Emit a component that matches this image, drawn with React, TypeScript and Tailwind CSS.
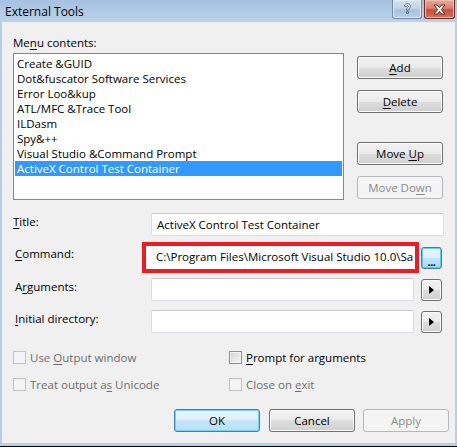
import type { ReactNode } from "react";

const items = [
  "Create &GUID",
  "Dot&fuscator Software Services",
  "Error Loo&kup",
  "ATL/MFC &Trace Tool",
  "ILDasm",
  "Spy&++",
  "Visual Studio &Command Prompt",
  "ActiveX Control Test Container",
];

// access key: underline the char at index `at`
function Mn({ text, at }: { text: string; at: number }) {
  return (
    <span className="whitespace-pre">
      {text.slice(0, at)}
      <span className="underline decoration-1 underline-offset-[2px]">{text[at]}</span>
      {text.slice(at + 1)}
    </span>
  );
}

function WinButton({
  children,
  kind = "normal",
  className = "",
}: {
  children: ReactNode;
  kind?: "normal" | "default" | "disabled";
  className?: string;
}) {
  const look =
    kind === "default"
      ? "border-[#3c7fb1] bg-[linear-gradient(#ebf6fd_0%,#dcf0fb_50%,#c7e7f8_50%,#b9def3_100%)] shadow-[inset_0_0_0_1px_#7ad0f5] text-black"
      : kind === "disabled"
        ? "border-[#b5b8bb] bg-[#f4f4f4] text-[#8b8b8b]"
        : "border-[#707070] bg-[linear-gradient(#f2f2f2_0%,#ebebeb_50%,#dedede_50%,#d0d0d0_100%)] shadow-[inset_0_0_0_1px_#fbfbfb] text-black";
  return (
    <div
      className={`flex h-[23px] w-[86px] items-center justify-center rounded-[3px] border ${look} ${className}`}
    >
      <span className="whitespace-pre">{children}</span>
    </div>
  );
}

function ArrowButton() {
  return (
    <div className="flex h-[22px] w-[21px] items-center justify-center rounded-[3px] border border-[#707070] bg-[linear-gradient(#f2f2f2_0%,#ebebeb_50%,#dedede_50%,#d0d0d0_100%)] shadow-[inset_0_0_0_1px_#fbfbfb]">
      <svg width="5" height="8" viewBox="0 0 5 8">
        <path d="M0 0 L5 4 L0 8 Z" fill="#000" />
      </svg>
    </div>
  );
}

function TextBox({ value = "", className = "" }: { value?: string; className?: string }) {
  return (
    <div
      className={`flex h-[23px] items-center overflow-hidden whitespace-nowrap rounded-[2px] border border-[#dadde3] border-t-[#c5c8ce] bg-white pl-[5px] ${className}`}
    >
      {value}
    </div>
  );
}

function CheckBox({ disabled = false, label }: { disabled?: boolean; label: ReactNode }) {
  return (
    <div className={`flex h-[15px] items-center ${disabled ? "text-[#6d6d6d]" : "text-black"}`}>
      <div
        className={`h-[13px] w-[13px] border ${
          disabled
            ? "border-[#c4c4c4] bg-[#f4f4f4]"
            : "border-[#8e8f8f] bg-[linear-gradient(135deg,#cfd2d6,#f7f7f7)] shadow-[inset_0_0_0_1px_#f4f4f4]"
        }`}
      />
      <span className="ml-[4px]">{label}</span>
    </div>
  );
}

export default function App() {
  return (
    <div className="h-[447px] w-[457px] overflow-hidden bg-black font-['Segoe_UI','Open_Sans',sans-serif] text-[11.5px] leading-[15px] text-black">
      <div className="flex h-[446px] flex-col bg-[#b6cfe9]">
        {/* Caption */}
        <div className="flex h-[22px] items-start bg-[linear-gradient(#a6c1df,#bcd2ea)]">
          <span className="ml-[5px] mt-[4px] text-[12px]">External Tools</span>
          <div className="ml-auto mr-[2px] flex gap-[2px]">
            <div className="flex h-[19px] w-[30px] items-center justify-center rounded-b-[3px] border border-t-0 border-[#6e87a5] bg-[linear-gradient(#d5e2f0_0%,#c3d4e8_45%,#a9c0db_55%,#bccfe6_100%)] shadow-[inset_0_0_0_1px_#e3ecf6]">
              <svg width="9" height="12" viewBox="0 0 9 12">
                <path
                  d="M1.5 3.2 C1.5 1.4 3 0.8 4.5 0.8 C6.3 0.8 7.5 1.8 7.5 3.3 C7.5 5 5.5 5.3 5.5 7 L3.5 7 C3.5 4.7 5.4 4.6 5.4 3.4 C5.4 2.8 5 2.5 4.5 2.5 C3.9 2.5 3.5 2.9 3.5 3.4 Z M3.5 8.3 L5.5 8.3 L5.5 10.4 L3.5 10.4 Z"
                  fill="#fff"
                  stroke="#3d5470"
                  strokeWidth="0.8"
                />
              </svg>
            </div>
            <div className="flex h-[19px] w-[31px] items-center justify-center rounded-b-[3px] border border-t-0 border-[#6b2a22] bg-[linear-gradient(#e9a899_0%,#d9826f_45%,#c4503b_55%,#d5735a_100%)] shadow-[inset_0_0_0_1px_#eebcb0]">
              <svg width="13" height="11" viewBox="0 0 13 11">
                <path
                  d="M1 1 L4.5 1 L6.5 3.5 L8.5 1 L12 1 L8.3 5.5 L12 10 L8.5 10 L6.5 7.5 L4.5 10 L1 10 L4.7 5.5 Z"
                  fill="#fff"
                  stroke="#4a1a14"
                  strokeWidth="0.9"
                  strokeLinejoin="round"
                />
              </svg>
            </div>
          </div>
        </div>

        {/* Frame + client */}
        <div className="flex flex-1 px-[2px] pb-[3px]">
          <div className="flex-1 bg-[#f0f0f0] pl-[11px] pt-[13px]">
            <div>
              <Mn text="Menu contents:" at={2} />
            </div>

            <div className="mt-[3px] flex">
              <div className="h-[147px] w-[331px] border border-[#828790] bg-white px-[1px] pt-[2px]">
                {items.map((it, i) => (
                  <div
                    key={it}
                    className={`h-[15px] whitespace-nowrap pl-[2px] ${i === items.length - 1 ? "bg-[#3399ff] text-white" : ""}`}
                  >
                    {it}
                  </div>
                ))}
              </div>
              <div className="ml-[13px] mt-[3px] flex flex-col">
                <WinButton>
                  <Mn text="Add" at={0} />
                </WinButton>
                <WinButton className="mt-[11px]">
                  <Mn text="Delete" at={0} />
                </WinButton>
                <WinButton className="mt-[29px]">
                  <Mn text="Move Up" at={5} />
                </WinButton>
                <WinButton kind="disabled" className="mt-[11px]">
                  <Mn text="Move Down" at={7} />
                </WinButton>
              </div>
            </div>

            {/* Fields */}
            <div className="mt-[13px] flex flex-col gap-[9px]">
              <div className="flex items-start">
                <div className="w-[138px] pt-[1px]">
                  <Mn text="Title:" at={0} />
                </div>
                <TextBox value="ActiveX Control Test Container" className="w-[293px]" />
              </div>

              <div className="flex items-start">
                <div className="w-[138px] pl-[2px] pt-[1px]">
                  <Mn text="Command:" at={0} />
                </div>
                <div className="relative h-[23px] w-[263px]">
                  <div className="absolute left-[-9px] top-[-3px] h-[31px] w-[277px] border-[4px] border-[#ed1c24] bg-white" />
                  <div className="relative flex h-[23px] items-center overflow-hidden whitespace-nowrap pl-[5px]">
                    C:\Program Files\Microsoft Visual Studio 10.0\Samples\1033\VC
                  </div>
                </div>
                <div className="ml-[7px] mt-[2px] flex h-[22px] w-[21px] items-end justify-center rounded-[3px] border border-[#3c7fb1] bg-[linear-gradient(#eaf6fd_0%,#d9f0fc_50%,#bee6fd_50%,#a7d9f5_100%)] pb-[4px] shadow-[inset_0_0_0_1px_#5fcbf7]">
                  <span className="text-[11px] font-bold leading-[5px] tracking-[-0.5px]">...</span>
                </div>
              </div>

              <div className="flex items-start">
                <div className="w-[138px] pl-[2px] pt-[1px]">
                  <Mn text="Arguments:" at={1} />
                </div>
                <TextBox className="w-[263px]" />
                <div className="ml-[7px] mt-[1px]">
                  <ArrowButton />
                </div>
              </div>

              <div className="flex items-start">
                <div className="w-[138px] pl-[2px] pt-[1px]">
                  <Mn text="Initial directory:" at={0} />
                </div>
                <TextBox className="w-[263px]" />
                <div className="ml-[7px] mt-[1px]">
                  <ArrowButton />
                </div>
              </div>
            </div>

            {/* Options */}
            <div className="mt-[17px] grid grid-cols-[216px_1fr] gap-y-[12px]">
              <CheckBox disabled label={<Mn text="Use Output window" at={4} />} />
              <CheckBox label={<Mn text="Prompt for arguments" at={0} />} />
              <CheckBox disabled label={<Mn text="Treat output as Unicode" at={14} />} />
              <CheckBox disabled label={<Mn text="Close on exit" at={9} />} />
            </div>

            <div className="mt-[17px] flex pl-[161px]">
              <WinButton kind="default">OK</WinButton>
              <WinButton className="ml-[9px]">Cancel</WinButton>
              <WinButton kind="disabled" className="ml-[8px]">
                Apply
              </WinButton>
            </div>
          </div>
        </div>
      </div>
    </div>
  );
}
